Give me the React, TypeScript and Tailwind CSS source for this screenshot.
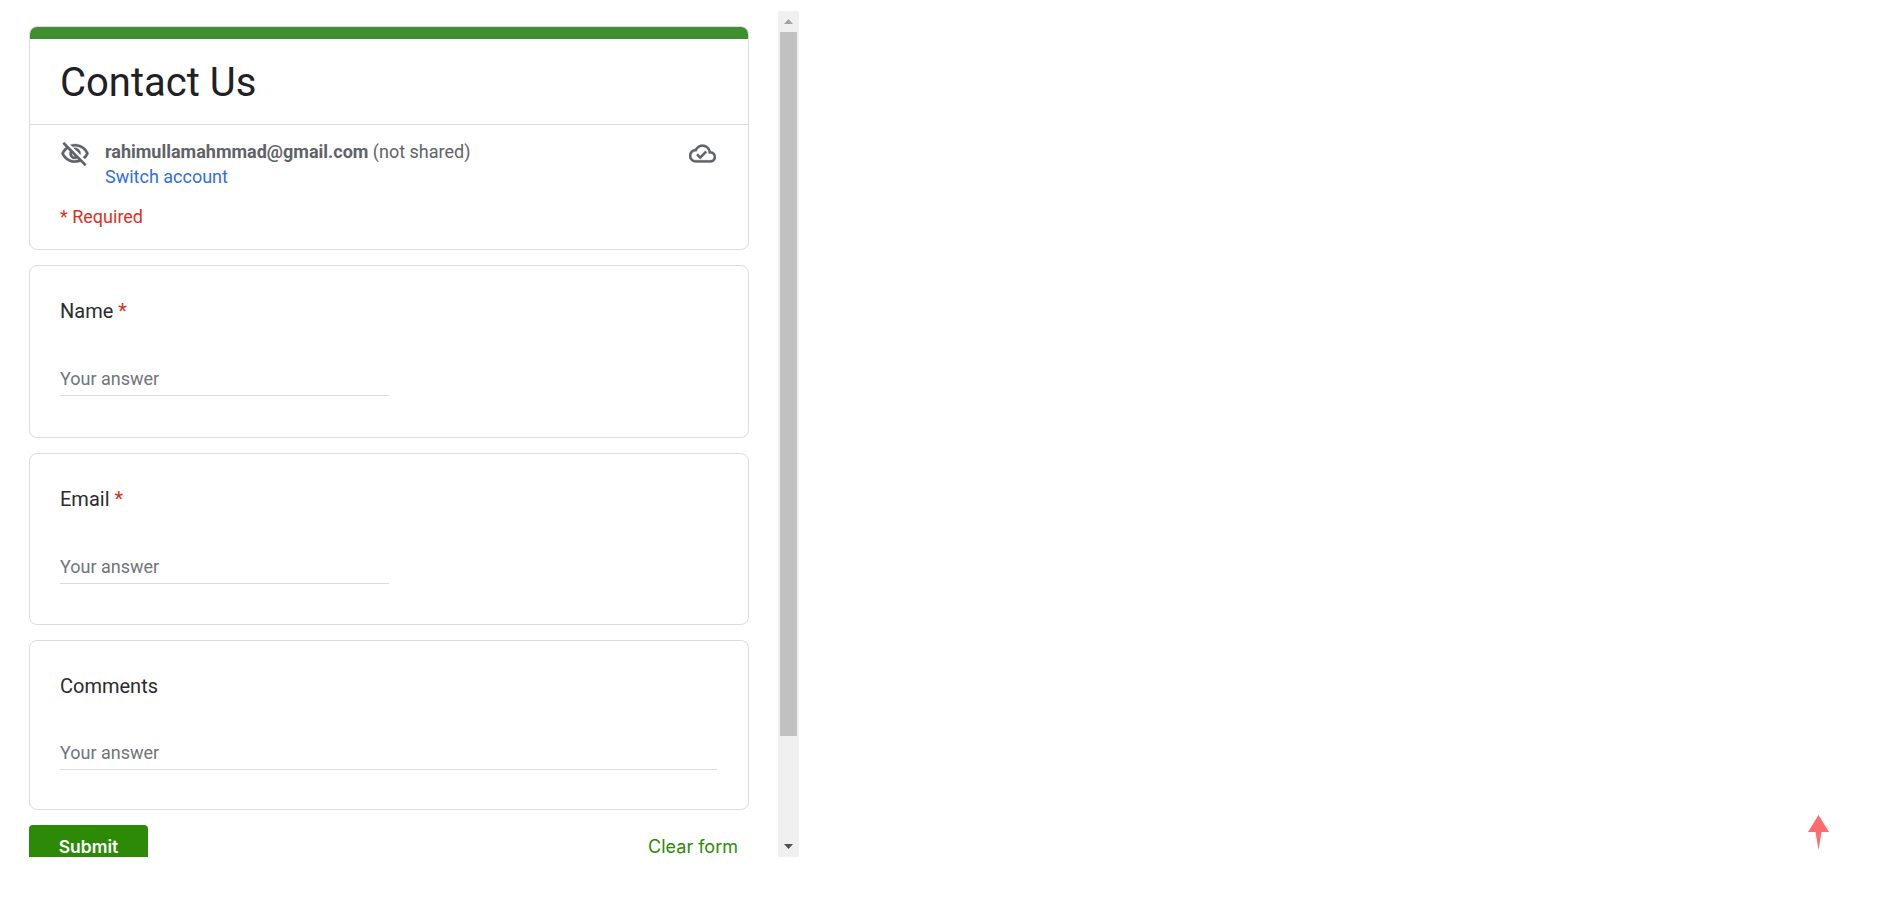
function Question({ label, required, full, h, inputMt }: { label: string; required?: boolean; full?: boolean; h: string; inputMt: string }) {
  return (
    <div className={`box-border rounded-lg border border-[#dadce0] bg-white pl-[30px] pr-[31px] pt-[33px] ${h}`}>
      <div className="text-[20px] leading-6 text-[#2a2b2e]">
        {label}
        {required && <span className="text-[#d93025]"> *</span>}
      </div>
      <div className={`${full ? "w-full" : "w-[329px]"} ${inputMt} border-b border-[#dadce0] pb-[4px] text-[18px] leading-6 text-[#70757a]`}>
        Your answer
      </div>
    </div>
  );
}

export default function App() {
  return (
    <div className="relative h-[915px] w-full overflow-hidden bg-white font-['Roboto',sans-serif]">
      <div className="ml-[10px] flex h-[857px] w-[789px] pt-[11px]">
        <div className="h-full w-[768px] overflow-hidden pl-[19px] pr-[29px] pt-[15px]">
          <div className="flex flex-col gap-[15px]">
            <div className="box-border h-[224px] overflow-hidden rounded-lg border border-[#dadce0] bg-white">
              <div className="-mx-px -mt-px h-[13px] bg-[#3f8f2e]" />
              <div className="h-[86px] border-b border-[#dadce0] pl-[30px] pt-[20px] text-[40px] leading-[48px] text-[#202124]">
                Contact Us
              </div>
              <div className="flex pl-[30px] pr-[32px] pt-[14px]">
                <svg viewBox="0 0 24 24" className="h-[30px] w-[30px] shrink-0" fill="#5f6368" stroke="#5f6368" strokeWidth={0.25}>
                  <path d="M12 6c3.79 0 7.17 2.13 8.82 5.5-.59 1.22-1.42 2.27-2.41 3.12l1.41 1.41c1.39-1.23 2.49-2.77 3.18-4.53C21.27 7.11 17 4 12 4c-1.27 0-2.49.2-3.64.57l1.65 1.65C10.66 6.09 11.32 6 12 6zm-1.07 1.14L13 9.21c.57.25 1.03.71 1.28 1.28l2.07 2.07c.08-.34.14-.7.14-1.07C16.5 9.01 14.48 7 12 7c-.37 0-.72.05-1.07.14zM2.01 3.87l2.68 2.68C3.06 7.83 1.77 9.53 1 11.5 2.73 15.89 7 19 12 19c1.52 0 2.98-.29 4.32-.82l3.42 3.42 1.41-1.41L3.42 2.45 2.01 3.87zm7.5 7.5l2.61 2.61c-.04.01-.08.02-.12.02-1.38 0-2.5-1.12-2.5-2.5 0-.05.01-.08.01-.13zm-3.4-3.4l1.75 1.75c-.23.55-.36 1.15-.36 1.78 0 2.48 2.02 4.5 4.5 4.5.63 0 1.23-.13 1.77-.36l.98.98c-.88.24-1.8.38-2.75.38-3.79 0-7.17-2.13-8.82-5.5.7-1.43 1.72-2.61 2.93-3.53z" />
                </svg>
                <div className="ml-[15px] flex-1 text-[18px] leading-[25px]">
                  <div className="text-[#5f6368]">
                    <span className="font-bold">rahimullamahmmad@gmail.com</span> (not shared)
                  </div>
                  <div className="text-[#2f6fe4]">Switch account</div>
                </div>
                <svg viewBox="0 0 24 24" className="mt-[1px] h-[27px] w-[27px] shrink-0" fill="#5f6368" stroke="#5f6368" strokeWidth={0.3}>
                  <path d="M19.35 10.04C18.67 6.59 15.64 4 12 4 9.11 4 6.6 5.64 5.35 8.04 2.34 8.36 0 10.91 0 14c0 3.31 2.69 6 6 6h13c2.76 0 5-2.24 5-5 0-2.64-2.05-4.78-4.65-4.96zM19 18H6c-2.21 0-4-1.79-4-4s1.79-4 4-4h.71C7.37 7.69 9.48 6 12 6c3.04 0 5.5 2.46 5.5 5.5v.5H19c1.66 0 3 1.34 3 3s-1.34 3-3 3zm-9-3.82l-2.09-2.09L6.5 13.5 10 17l6.01-6.01-1.41-1.41z" />
                </svg>
              </div>
              <div className="pl-[30px] pt-[16px] text-[18px] leading-6 text-[#d93025]">* Required</div>
            </div>
            <Question label="Name" required h="h-[173px]" inputMt="mt-[44px]" />
            <Question label="Email" required h="h-[172px]" inputMt="mt-[44px]" />
            <Question label="Comments" full h="h-[170px]" inputMt="mt-[43px]" />
          </div>
          <div className="mt-[15px] flex items-start justify-between pr-[11px]">
            <div className="flex h-[45px] w-[119px] items-center justify-center rounded-[4px] bg-[#2d8a07] font-['Inter',sans-serif] text-[17.5px] font-semibold text-white">
              Submit
            </div>
            <div className="pt-[10px] font-['Inter',sans-serif] text-[18px] leading-6 text-[#2d8a07]">Clear form</div>
          </div>
        </div>
        <div className="flex h-full w-[21px] flex-col items-center bg-[#f0f0f0] px-[2px]">
          <div className="flex h-[21px] w-full shrink-0 items-center justify-center">
            <svg width="9" height="5" viewBox="0 0 9 5"><polygon points="4.5,0 9,5 0,5" fill="#a3a3a3" /></svg>
          </div>
          <div className="h-[704px] w-full shrink-0 bg-[#c1c1c1]" />
          <div className="flex-1" />
          <div className="flex h-[21px] w-full shrink-0 items-center justify-center">
            <svg width="9" height="5" viewBox="0 0 9 5"><polygon points="0,0 9,0 4.5,5" fill="#505050" /></svg>
          </div>
        </div>
      </div>
      <svg className="absolute left-[1807px] top-[814px]" width="23" height="37" viewBox="0 0 23 37">
        <polygon points="11.5,1 22,18 14.5,18 11.5,36 8.5,18 1,18" fill="#ff6b6e" />
      </svg>
    </div>
  );
}
